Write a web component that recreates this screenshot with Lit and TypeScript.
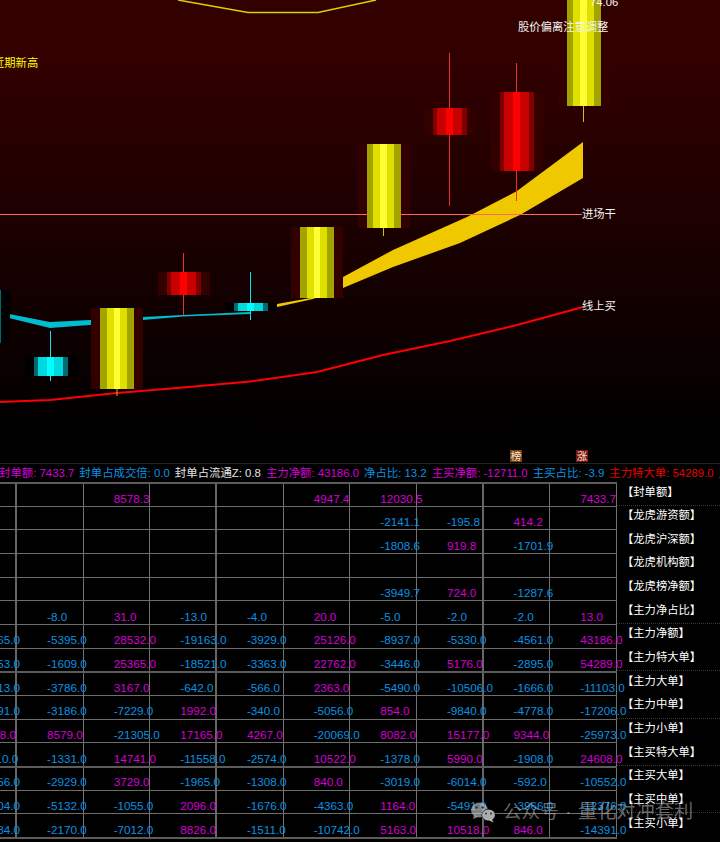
import { LitElement, html, svg, css } from "lit";
import { customElement } from "lit/decorators.js";

type Candle = { x: number; top: number; bottom: number; lo: number; hi: number; kind: "y" | "r" | "c" };

const CANDLES: Candle[] = [
  { x: -16, top: 290, bottom: 343, lo: 290, hi: 343, kind: "c" },
  { x: 50.5, top: 357, bottom: 376, lo: 331, hi: 381, kind: "c" },
  { x: 117, top: 308, bottom: 389, lo: 308, hi: 396, kind: "y" },
  { x: 183.5, top: 272, bottom: 295, lo: 253, hi: 315, kind: "r" },
  { x: 250.5, top: 303, bottom: 311, lo: 272, hi: 320, kind: "c" },
  { x: 317, top: 227, bottom: 298, lo: 227, hi: 298, kind: "y" },
  { x: 383.5, top: 144, bottom: 228, lo: 144, hi: 236, kind: "y" },
  { x: 449.5, top: 108, bottom: 135, lo: 53, hi: 206, kind: "r" },
  { x: 516.5, top: 92, bottom: 171, lo: 63, hi: 201, kind: "r" },
  { x: 583.5, top: -2, bottom: 106, lo: 0, hi: 122, kind: "y" },
];

const STYLE = {
  y: { c: ["#a3a300", "#e0e000", "#ffff33", "#e0e000", "#a3a300"], f: [0.2, 0.2, 0.2, 0.2, 0.2], halo: "#330000", wick: "#c8c800" },
  r: { c: ["#800000", "#c80000", "#ff0000", "#c80000", "#800000"], f: [0.14, 0.26, 0.2, 0.26, 0.14], halo: "#330000", wick: "#e83030" },
  c: { c: ["#006a70", "#00d8e0", "#00ffff", "#00d8e0", "#006a70"], f: [0.14, 0.26, 0.2, 0.26, 0.14], halo: "#000000", wick: "#00e5ee" },
};

const LABELS = ["封单额", "龙虎游资额", "龙虎沪深额", "龙虎机构额", "龙虎榜净额", "主力净占比", "主力净额", "主力特大单", "主力大单", "主力中单", "主力小单", "主买特大单", "主买大单", "主买中单", "主买小单"];
const DOTTED = [0, 5, 7, 9, 11, 13];

const ROWS: string[][] = [
  ["", "", "8578.3", "", "", "4947.4", "12030.5", "", "", "7433.7"],
  ["", "", "", "", "", "", "-2141.1", "-195.8", "414.2", ""],
  ["", "", "", "", "", "", "-1808.6", "919.8", "-1701.9", ""],
  ["", "", "", "", "", "", "", "", "", ""],
  ["", "", "", "", "", "", "-3949.7", "724.0", "-1287.6", ""],
  ["", "-8.0", "31.0", "-13.0", "-4.0", "20.0", "-5.0", "-2.0", "-2.0", "13.0"],
  ["-1265.0", "-5395.0", "28532.0", "-19163.0", "-3929.0", "25126.0", "-8937.0", "-5330.0", "-4561.0", "43186.0"],
  ["-1553.0", "-1609.0", "25365.0", "-18521.0", "-3363.0", "22762.0", "-3446.0", "5176.0", "-2895.0", "54289.0"],
  ["-2913.0", "-3786.0", "3167.0", "-642.0", "-566.0", "2363.0", "-5490.0", "-10506.0", "-1666.0", "-11103.0"],
  ["-4791.0", "-3186.0", "-7229.0", "1992.0", "-340.0", "-5056.0", "854.0", "-9840.0", "-4778.0", "-17206.0"],
  ["3478.0", "8579.0", "-21305.0", "17165.0", "4267.0", "-20069.0", "8082.0", "15177.0", "9344.0", "-25973.0"],
  ["-1110.0", "-1331.0", "14741.0", "-11558.0", "-2574.0", "10522.0", "-1378.0", "5990.0", "-1908.0", "24608.0"],
  ["-1356.0", "-2929.0", "3729.0", "-1965.0", "-1308.0", "840.0", "-3019.0", "-6014.0", "-592.0", "-10552.0"],
  ["-2204.0", "-5132.0", "-1055.0", "2096.0", "-1676.0", "-4363.0", "1164.0", "-5491.0", "-3966.0", "-12376.0"],
  ["-2134.0", "-2170.0", "-7012.0", "8826.0", "-1511.0", "-10742.0", "5163.0", "10518.0", "846.0", "-14391.0"],
];

const STATUS: [string, string][] = [
  ["封单额: 7433.7", "m"],
  ["封单占成交倍: 0.0", "b"],
  ["封单占流通Z: 0.8", "w"],
  ["主力净额: 43186.0", "m"],
  ["净占比: 13.2", "b"],
  ["主买净额: -12711.0", "m"],
  ["主买占比: -3.9", "b"],
  ["主力特大单: 54289.0", "r"],
  ["主力大单: -11103.0", "o"],
];

@customElement("app-root")
export class AppRoot extends LitElement {
  static styles = css`
    :host {
      display: block;
      width: 720px;
      height: 842px;
      overflow: hidden;
      background: #000;
      position: relative;
      font-family: "Liberation Sans", "Noto Sans CJK SC", sans-serif;
    }
    .chart {
      display: block;
      width: 720px;
      height: 463px;
      background: linear-gradient(#330000 0, #330000 50px, #000 440px);
    }
    .chart text {
      font-family: "Liberation Sans", "Noto Sans CJK SC", sans-serif;
      font-size: 11.3px;
      fill: #f4f4f4;
    }
    .chart text.high { fill: #ffff00; }
    .status {
      display: flex;
      gap: 5px;
      height: 19px;
      align-items: center;
      box-sizing: border-box;
      border-top: 1px solid #222;
      padding-bottom: 2px;
      white-space: nowrap;
      font-size: 11.4px;
      overflow: hidden;
      margin-left: -1px;
    }
    .status span { flex: none; }
    .m { color: #d400d4; }
    .b { color: #0a92e0; }
    .w { color: #e4e4e4; }
    .r { color: #e80000; }
    .o { color: #e8a000; }
    .body {
      display: flex;
      align-items: flex-start;
    }
    .table {
      flex: none;
      width: 666.67px;
      margin-left: -49.67px;
      border-bottom: 2px solid #5c5c5c;
    }
    .row {
      display: grid;
      grid-template-columns: repeat(10, 66.67px);
      height: 23.67px;
      box-sizing: border-box;
      border-top: 1px solid #6e6e6e;
    }
    .row.heavy {
      border-top: 2px solid #5c5c5c;
    }
    .cell {
      box-sizing: border-box;
      border-right: 1px solid #707070;
      padding-left: 30px;
      padding-top: 8.5px;
      font-size: 11.7px;
      line-height: 13px;
      white-space: nowrap;
    }
    .row.heavy .cell { padding-top: 7.5px; }
    .cell:nth-child(1),
    .cell:nth-child(4),
    .cell:nth-child(8) {
      border-right: 2px solid #666;
    }
    .side {
      flex: none;
      width: 103px;
    }
    .label {
      height: 23.67px;
      box-sizing: border-box;
      padding-left: 5px;
      padding-top: 2.5px;
      font-size: 11.3px;
      line-height: 14px;
      color: #ffffff;
      white-space: nowrap;
      border-bottom: 1px solid transparent;
    }
    .label.dot { border-bottom: 1px dotted #3a3a3a; }
    .badge {
      position: absolute;
      top: 450px;
      width: 12px;
      height: 12px;
      font-size: 10.5px;
      line-height: 12px;
      text-align: center;
      color: #f4e4d0;
    }
    .badge.a { left: 510px; background: #7a4414; }
    .badge.b2 { left: 576px; background: #7c1410; }
    .mark {
      position: absolute;
      left: 470px;
      top: 801px;
      display: flex;
      align-items: center;
      gap: 7px;
      font-size: 18.6px;
      line-height: 22px;
      color: rgba(190, 190, 190, 0.55);
      white-space: nowrap;
    }
    .mark svg { display: block; }
    .sep { margin: 0 6.5px; }
    .tail { font-size: 19.2px; }
  `;

  private candle(c: Candle) {
    const s = STYLE[c.kind];
    return svg`<rect x=${c.x - 26} y=${c.top} width="52" height=${c.bottom - c.top} fill=${s.halo} shape-rendering="crispEdges"></rect>`;
  }

  private candleBody(c: Candle) {
    const s = STYLE[c.kind];
    const w = 34;
    let x = c.x - w / 2;
    const parts = s.c.map((col, i) => {
      const pw = s.f[i] * w;
      const r = svg`<rect x=${x} y=${c.top} width=${pw + 0.3} height=${c.bottom - c.top} fill=${col} shape-rendering="crispEdges"></rect>`;
      x += pw;
      return r;
    });
    const wick = svg`<line x1=${c.x} x2=${c.x} y1=${c.lo} y2=${c.hi} stroke=${s.wick} stroke-width="1"></line>`;
    return svg`${wick}${parts}`;
  }

  private chart() {
    return html`<svg class="chart" viewBox="0 0 720 463">
      <polyline points="178,0 248,12.5 318,12.5 376,0" fill="none" stroke="#d4d400" stroke-width="1.5"></polyline>
      <polygon fill="#00bcd0" points="9,314 50,322 90,320 143,317 183,315 250,312 250,314 183,316.5 143,320 90,325 50,328 9,318"></polygon>
      <polygon fill="#f0c800" points="277,304 313,297.5 343,277 393,250 467,217 517,191 583,142 583,178 520,215 460,243 393,267 343,288 313,299 277,307"></polygon>
      ${CANDLES.map((c) => this.candle(c))}
      <line x1="0" x2="582" y1="214.5" y2="214.5" stroke="#ff6666" stroke-width="1"></line>
      <polyline points="0,402 50,400 117,393 183,387.5 250,381.5 317,372 383,355 450,341 517,325 583,307" fill="none" stroke="#ff0000" stroke-width="2"></polyline>
      ${CANDLES.map((c) => this.candleBody(c))}
      <text class="high" x="-7" y="67">近期新高</text>
      <text x="518" y="31">股价偏离注意调整</text>
      <text x="590" y="6">74.06</text>
      <text x="582" y="218">进场干</text>
      <text x="582" y="310">线上买</text>
    </svg>`;
  }

  render() {
    return html`
      ${this.chart()}
      <div class="badge a">榜</div>
      <div class="badge b2">涨</div>
      <div class="status">
        ${STATUS.map(([t, c]) => html`<span class=${c}>${t}</span>`)}
      </div>
      <div class="body">
        <div class="table">
          ${ROWS.map(
            (r, i) => html`<div class="row ${i === 0 || i === 8 || i === 12 ? "heavy" : ""}">
              ${r.map(
                (v) => html`<div class="cell ${v.startsWith("-") ? "b" : "m"}">${v}</div>`
              )}
            </div>`
          )}
        </div>
        <div class="side">
          ${LABELS.map(
            (l, i) => html`<div class="label ${DOTTED.includes(i) ? "dot" : ""}">【${l}】</div>`
          )}
        </div>
      </div>
      <div class="mark">
        <svg width="26" height="22" viewBox="0 0 26 22">
          <ellipse cx="9.5" cy="9" rx="8.5" ry="7.5" fill="rgba(205,205,205,0.62)"></ellipse>
          <path d="M4 14 L3 18 L8 16 Z" fill="rgba(205,205,205,0.62)"></path>
          <circle cx="6.5" cy="6.5" r="1.2" fill="#333"></circle>
          <circle cx="12.5" cy="6.5" r="1.2" fill="#333"></circle>
          <ellipse cx="18.5" cy="14" rx="7" ry="6" fill="#000"></ellipse>
          <ellipse cx="18.5" cy="14" rx="6.5" ry="5.6" fill="rgba(215,215,215,0.8)"></ellipse>
          <path d="M22 18 L23.5 21.5 L19 19.5 Z" fill="rgba(215,215,215,0.8)"></path>
          <circle cx="16" cy="12.5" r="1" fill="#333"></circle>
          <circle cx="21" cy="12.5" r="1" fill="#333"></circle>
        </svg>
        <span>公众号<span class="sep">·</span><span class="tail">量化对冲套利</span></span>
      </div>
    `;
  }
}
